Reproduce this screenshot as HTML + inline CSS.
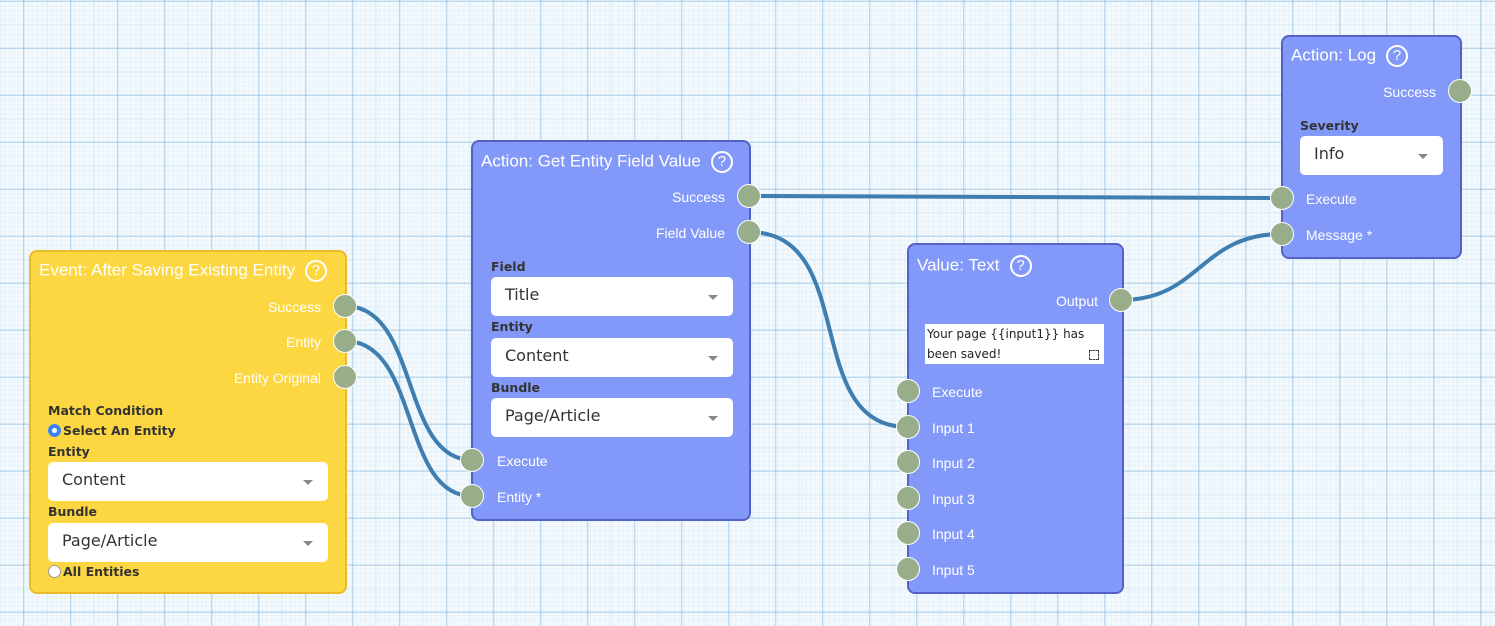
<!DOCTYPE html>
<html><head><meta charset="utf-8"><style>
*{box-sizing:border-box;margin:0;padding:0}
body{width:1495px;height:626px;overflow:hidden;position:relative;font-family:"Liberation Sans",sans-serif;
background-color:#f3f9fd;
background-image:
linear-gradient(90deg,rgba(120,170,210,.3) 1.5px,transparent 1.5px),
linear-gradient(0deg,rgba(120,170,210,.3) 1.5px,transparent 1.5px),
linear-gradient(90deg,rgba(150,200,235,.22) 1px,transparent 1px),
linear-gradient(0deg,rgba(150,200,235,.22) 1px,transparent 1px),
linear-gradient(90deg,rgba(170,210,240,.15) 1px,transparent 1px),
linear-gradient(0deg,rgba(170,210,240,.15) 1px,transparent 1px);
background-size:47px 47px,47px 47px,23.5px 23.5px,23.5px 23.5px,4.7px 4.7px,4.7px 4.7px;
background-position:23px 2px,23px 2px,23px 2px,23px 2px,23px 2px,23px 2px;}
.node{position:absolute;border-radius:8px;color:#fff}
.y{background:#fdd741;border:2px solid #e9bc2a}
.b{background:#8399f9;border:2px solid #5561c6}
.t{position:absolute;font-size:17px;white-space:nowrap}
.q{display:inline-block;width:22px;height:22px;border:2px solid #fff;border-radius:50%;text-align:center;font-size:15px;line-height:18px;margin-left:10px;vertical-align:middle}
.lbl{position:absolute;font-size:14px;white-space:nowrap}
.r{text-align:right}
.port{position:absolute;width:24px;height:24px;border-radius:50%;background:#98ae8a;border:1.5px solid #fff}
.h{position:absolute;font-size:12.5px;font-weight:bold;color:#333;font-family:"DejaVu Sans",sans-serif;white-space:nowrap}
.sel{position:absolute;background:#fff;border-radius:5px;height:39px;font-family:"DejaVu Sans",sans-serif;font-size:16px;color:#333;padding:8px 14px}
.sel:after{content:"";position:absolute;right:15px;top:18px;border:5px solid transparent;border-top:5px solid #888;border-bottom:0}
svg{position:absolute;left:0;top:0}
</style></head><body>
<svg width="1495" height="626"><g fill="none" stroke="#3e7eb1" stroke-width="4">
<path d="M345 306 C420 306 400 460 472 460"/>
<path d="M345 341 C420 341 400 496 472 496"/>
<path d="M749 196 C1000 196 1030 198 1282 198"/>
<path d="M749 232 C860 232 800 427 908 427"/>
<path d="M1121 300 C1200 300 1200 234 1282 234"/>
</g></svg>

<div class="node y" style="left:29px;top:250px;width:318px;height:344px">
<div class="t" style="left:8px;top:8px">Event: After Saving Existing Entity<span class="q">?</span></div>
<div class="lbl r" style="right:24px;top:47px">Success</div>
<div class="lbl r" style="right:24px;top:82px">Entity</div>
<div class="lbl r" style="right:24px;top:118px">Entity Original</div>
<div class="h" style="left:17px;top:151px">Match Condition</div>
<div class="h" style="left:17px;top:171px"><span style="display:inline-block;width:13px;height:13px;border-radius:50%;border:4px solid #3b82f6;background:#fff;vertical-align:-2px;margin-right:2px"></span>Select An Entity</div>
<div class="h" style="left:17px;top:192px">Entity</div>
<div class="sel" style="left:17px;top:210px;width:280px">Content</div>
<div class="h" style="left:17px;top:252px">Bundle</div>
<div class="sel" style="left:17px;top:271px;width:280px">Page/Article</div>
<div class="h" style="left:17px;top:312px"><span style="display:inline-block;width:13px;height:13px;border-radius:50%;background:#fff;border:1px solid #999;vertical-align:-2px;margin-right:2px"></span>All Entities</div>
</div>
<div class="port" style="left:333px;top:294px"></div>
<div class="port" style="left:333px;top:329px"></div>
<div class="port" style="left:333px;top:365px"></div>

<div class="node b" style="left:471px;top:140px;width:280px;height:381px">
<div class="t" style="left:8px;top:9px">Action: Get Entity Field Value<span class="q">?</span></div>
<div class="lbl r" style="right:24px;top:47px">Success</div>
<div class="lbl r" style="right:24px;top:83px">Field Value</div>
<div class="h" style="left:18px;top:117px">Field</div>
<div class="sel" style="left:18px;top:135px;width:242px">Title</div>
<div class="h" style="left:18px;top:177px">Entity</div>
<div class="sel" style="left:18px;top:196px;width:242px">Content</div>
<div class="h" style="left:18px;top:238px">Bundle</div>
<div class="sel" style="left:18px;top:256px;width:242px">Page/Article</div>
<div class="lbl" style="left:24px;top:311px">Execute</div>
<div class="lbl" style="left:24px;top:347px">Entity *</div>
</div>
<div class="port" style="left:737px;top:184px"></div>
<div class="port" style="left:737px;top:220px"></div>
<div class="port" style="left:460px;top:448px"></div>
<div class="port" style="left:460px;top:484px"></div>

<div class="node b" style="left:907px;top:243px;width:217px;height:351px">
<div class="t" style="left:8px;top:10px">Value: Text<span class="q">?</span></div>
<div class="lbl r" style="right:24px;top:48px">Output</div>
<div style="position:absolute;left:16px;top:79px;width:179px;height:40px;background:#fff;color:#222;font-family:'DejaVu Sans',sans-serif;font-size:12px;line-height:20px;padding-left:2px">Your page {{input1}} has been saved!<span style="position:absolute;right:5px;bottom:4px;width:10px;height:10px;border:1.5px dashed #444"></span></div>
<div class="lbl" style="left:23px;top:139px">Execute</div>
<div class="lbl" style="left:23px;top:175px">Input 1</div>
<div class="lbl" style="left:23px;top:210px">Input 2</div>
<div class="lbl" style="left:23px;top:246px">Input 3</div>
<div class="lbl" style="left:23px;top:281px">Input 4</div>
<div class="lbl" style="left:23px;top:317px">Input 5</div>
</div>
<div class="port" style="left:1109px;top:288px"></div>
<div class="port" style="left:896px;top:379px"></div>
<div class="port" style="left:896px;top:415px"></div>
<div class="port" style="left:896px;top:450px"></div>
<div class="port" style="left:896px;top:486px"></div>
<div class="port" style="left:896px;top:521px"></div>
<div class="port" style="left:896px;top:557px"></div>

<div class="node b" style="left:1281px;top:35px;width:181px;height:224px">
<div class="t" style="left:8px;top:8px">Action: Log<span class="q">?</span></div>
<div class="lbl r" style="right:24px;top:47px">Success</div>
<div class="h" style="left:17px;top:81px">Severity</div>
<div class="sel" style="left:17px;top:99px;width:143px">Info</div>
<div class="lbl" style="left:23px;top:154px">Execute</div>
<div class="lbl" style="left:23px;top:190px">Message *</div>
</div>
<div class="port" style="left:1448px;top:79px"></div>
<div class="port" style="left:1270px;top:186px"></div>
<div class="port" style="left:1270px;top:222px"></div>
</body></html>
